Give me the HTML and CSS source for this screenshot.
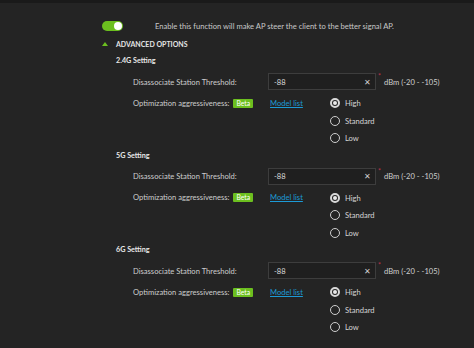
FILE: index.html
```html
<!DOCTYPE html>
<html lang="en">

<head>
    <meta charset="UTF-8">
    <title>Smart Steering</title>
    <link rel="stylesheet" href="styles.css">
</head>

<body>
    <div class="topbar"></div>
    <div class="panel">
        <div class="enable-row">
            <span class="toggle"><span class="knob"></span></span>
            <span class="hint">Enable this function will make AP steer the client to the better signal AP.</span>
        </div>
        <div class="advanced"><span class="caret"></span>ADVANCED OPTIONS</div>

        <div class="band">
            <div class="band-title">2.4G Setting</div>
            <div class="field">
                <label class="label">Disassociate Station Threshold:</label>
                <div class="input-group">
                    <div class="input"><span>-88</span><span class="clear">✕</span></div>
                    <span class="req">*</span>
                    <span class="unit">dBm (-20 - -105)</span>
                </div>
            </div>
            <div class="field opt">
                <label class="label">Optimization aggressiveness: <span class="beta">Beta</span></label>
                <a class="model" href="#">Model list</a>
                <div class="radios">
                    <div class="radio on"><span class="dot"></span>High</div>
                    <div class="radio"><span class="dot"></span>Standard</div>
                    <div class="radio"><span class="dot"></span>Low</div>
                </div>
            </div>
        </div>

        <div class="band">
            <div class="band-title">5G Setting</div>
            <div class="field">
                <label class="label">Disassociate Station Threshold:</label>
                <div class="input-group">
                    <div class="input"><span>-88</span><span class="clear">✕</span></div>
                    <span class="req">*</span>
                    <span class="unit">dBm (-20 - -105)</span>
                </div>
            </div>
            <div class="field opt">
                <label class="label">Optimization aggressiveness: <span class="beta">Beta</span></label>
                <a class="model" href="#">Model list</a>
                <div class="radios">
                    <div class="radio on"><span class="dot"></span>High</div>
                    <div class="radio"><span class="dot"></span>Standard</div>
                    <div class="radio"><span class="dot"></span>Low</div>
                </div>
            </div>
        </div>

        <div class="band">
            <div class="band-title">6G Setting</div>
            <div class="field">
                <label class="label">Disassociate Station Threshold:</label>
                <div class="input-group">
                    <div class="input"><span>-88</span><span class="clear">✕</span></div>
                    <span class="req">*</span>
                    <span class="unit">dBm (-20 - -105)</span>
                </div>
            </div>
            <div class="field opt">
                <label class="label">Optimization aggressiveness: <span class="beta">Beta</span></label>
                <a class="model" href="#">Model list</a>
                <div class="radios">
                    <div class="radio on"><span class="dot"></span>High</div>
                    <div class="radio"><span class="dot"></span>Standard</div>
                    <div class="radio"><span class="dot"></span>Low</div>
                </div>
            </div>
        </div>
    </div>
</body>

</html>
```

FILE: styles.css
```css
* {
    box-sizing: border-box;
    margin: 0;
    padding: 0;
}

body {
    background: #242424;
    color: #cfcfcf;
    font-family: 'Lato', 'Noto Sans', sans-serif;
    font-size: 7.6px;
    height: 100vh;
    overflow: hidden;
}

.topbar {
    height: 3px;
    background: #1a1a1a;
}

.panel {
    padding-left: 102px;
}

.enable-row {
    display: flex;
    align-items: center;
    height: 10px;
    margin-top: 18px;
}

.toggle {
    width: 21px;
    height: 10px;
    border-radius: 5px;
    background: #6cbf1f;
    display: flex;
    justify-content: flex-end;
    align-items: center;
    padding-right: 1px;
}

.knob {
    width: 8px;
    height: 8px;
    border-radius: 50%;
    background: #fff;
}

.hint {
    margin-left: 32px;
    color: #c8c8c8;
}

.advanced {
    display: flex;
    align-items: center;
    height: 12px;
    margin-top: 7px;
    margin-bottom: 5px;
    font-weight: bold;
    font-size: 7px;
    color: #e4e4e4;
}

.caret {
    width: 0;
    height: 0;
    border-left: 3px solid transparent;
    border-right: 3px solid transparent;
    border-bottom: 4px solid #6cbf1f;
    margin: 0 8px 0 0;
}

.band {
    margin-top: 2.5px;
}

.band-title {
    height: 12px;
    line-height: 12px;
    padding-left: 14px;
    font-weight: bold;
    font-size: 7.2px;
    color: #e8e8e8;
}

.field {
    display: grid;
    grid-template-columns: 166px auto;
    align-items: center;
    margin-top: 6px;
}

.label {
    padding-left: 31px;
    color: #cdcdcd;
}

.input-group {
    display: flex;
    align-items: center;
}

.input {
    width: 108px;
    height: 17px;
    border: 1px solid #3d3d3d;
    background: #1f1f1f;
    display: flex;
    align-items: center;
    justify-content: space-between;
    padding: 0 4px 0 5px;
    color: #d8d8d8;
}

.clear {
    font-size: 8px;
    color: #d0d0d0;
}

.req {
    align-self: flex-start;
    color: #c0334a;
    font-size: 7px;
    line-height: 6px;
    margin: 0 3px 0 2px;
}

.unit {
    color: #cfcfcf;
}

.field.opt {
    grid-template-columns: 168px 60px auto;
    align-items: start;
    margin-top: 4.5px;
}

.field.opt .label,
.field.opt .model {
    line-height: 17.5px;
}

.beta {
    display: inline-block;
    background: #6cbf1f;
    color: #fff;
    font-size: 6.8px;
    line-height: 9px;
    padding: 0 3px;
    border-radius: 1px;
    margin-left: 2px;
}

.model {
    color: #1c9ad6;
    text-decoration: underline;
}

.radio {
    display: flex;
    align-items: center;
    height: 17.5px;
    color: #d4d4d4;
}

.dot {
    width: 10px;
    height: 10px;
    border: 1px solid #cfcfcf;
    border-radius: 50%;
    margin-right: 5px;
    display: flex;
    align-items: center;
    justify-content: center;
}

.radio.on .dot {
    border: 2px solid #d8d8d8;
}

.radio.on .dot::after {
    content: "";
    width: 4px;
    height: 4px;
    border-radius: 50%;
    background: #e8e8e8;
}
```
